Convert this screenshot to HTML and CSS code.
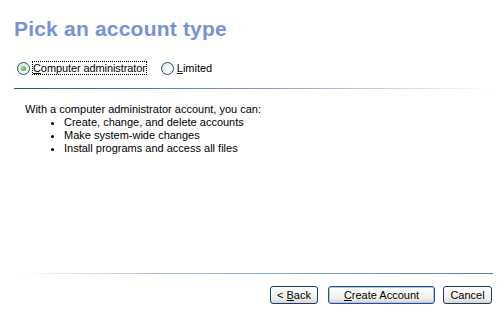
FILE: index.html
```html
<!DOCTYPE html>
<html lang="en">
<head>
  <meta charset="UTF-8">
  <title>Pick an account type</title>
  <link rel="stylesheet" href="styles.css">
</head>
<body>

  <h1 class="title">Pick an account type</h1>

  <div class="choices">
    <label class="choice">
      <span class="radio checked"><span class="dot"></span></span>
      <span class="focus"><u>C</u>omputer administrator</span>
    </label>
    <label class="choice">
      <span class="radio"></span>
      <span><u>L</u>imited</span>
    </label>
  </div>

  <div class="rule top"></div>

  <div class="info">
    <p>With a computer administrator account, you can:</p>
    <ul>
      <li>Create, change, and delete accounts</li>
      <li>Make system-wide changes</li>
      <li>Install programs and access all files</li>
    </ul>
  </div>

  <div class="rule bottom"></div>

  <div class="buttons">
    <button class="btn back">&lt; <u>B</u>ack</button>
    <button class="btn create"><u>C</u>reate Account</button>
    <button class="btn cancel">Cancel</button>
  </div>

</body>
</html>
```

FILE: styles.css
```css
body {
  margin: 0;
  width: 504px;
  height: 313px;
  background: #fff;
  font-family: "Liberation Sans", Tahoma, sans-serif;
  font-size: 11px;
  color: #000;
  overflow: hidden;
}

.title {
  margin: 0;
  padding: 17px 0 0 14px;
  height: 31px;
  font-family: "Liberation Sans", Arial, sans-serif;
  font-size: 21px;
  font-weight: bold;
  color: #7692d6;
  letter-spacing: 0.2px;
}

.choices {
  display: flex;
  align-items: center;
  padding: 13px 0 0 17px;
  height: 14px;
}

.choice {
  display: flex;
  align-items: center;
  margin-right: 15px;
}

.radio {
  width: 11px;
  height: 11px;
  border: 1px solid #1c5180;
  border-radius: 50%;
  background: radial-gradient(circle at 65% 65%, #fff 20%, #dcdcd4 100%);
  display: flex;
  align-items: center;
  justify-content: center;
  margin-right: 3px;
}

.radio .dot {
  width: 5px;
  height: 5px;
  border-radius: 50%;
  background: radial-gradient(circle at 35% 35%, #9be08c, #21a121);
}

.focus {
  outline: 1px dotted #000;
  outline-offset: 0;
  letter-spacing: -0.1px;
}

.rule {
  height: 1px;
}

.rule.top {
  margin: 13px 14px 0 14px;
  background: linear-gradient(to right, #21529f, #7e95c9 50%, #fff);
}

.info {
  padding: 14px 0 0 25px;
  height: 170px;
  line-height: 13px;
}

.info p {
  margin: 0;
}

.info ul {
  margin: 0;
  padding-left: 39px;
  list-style: disc;
}

.rule.bottom {
  margin: 0 11px 0 20px;
  background: linear-gradient(to right, #fff, #a9bfd9 30%, #4d7fb9);
}

.buttons {
  display: flex;
  justify-content: flex-end;
  padding: 12px 12px 0 0;
}

.btn {
  height: 18px;
  padding: 0;
  font-family: "Liberation Sans", Tahoma, sans-serif;
  font-size: 11px;
  color: #000;
  background: linear-gradient(#fff, #f0f0ea 70%, #d8d5c8);
  border: 1px solid #1b3b76;
  border-radius: 3px;
}

.btn.back {
  width: 48px;
}

.btn.create {
  width: 107px;
  margin-left: 10px;
  border-color: #2d4d8a;
  box-shadow: inset 0 0 0 1px #a8c8f0;
}

.btn.cancel {
  width: 49px;
  margin-left: 8px;
}
```
